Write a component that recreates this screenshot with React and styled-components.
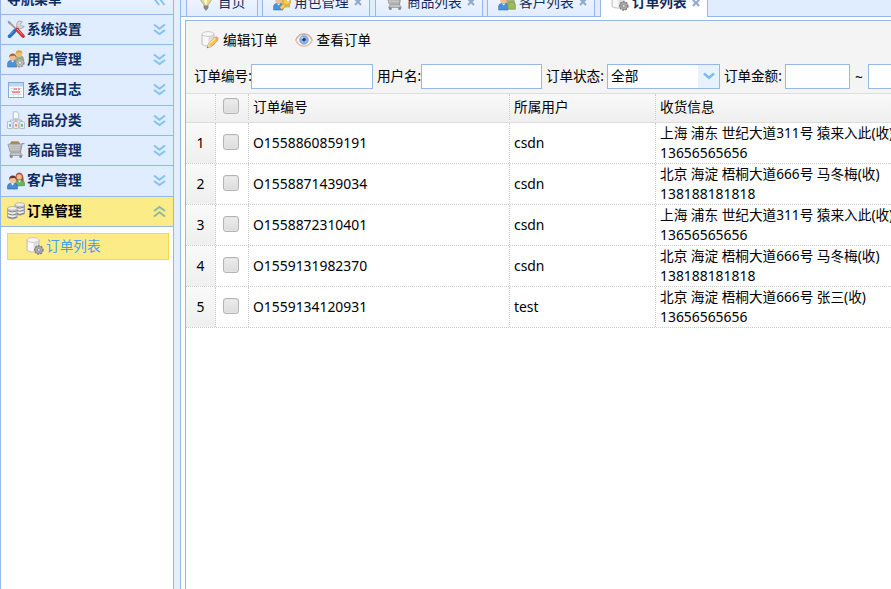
import React from 'react'
import styled, { createGlobalStyle } from 'styled-components'

const GlobalStyle = createGlobalStyle`
  * { box-sizing: border-box; }
  body {
    margin: 0;
    overflow: hidden;
    background: #fff;
    font-family: "Noto Sans", "Noto Sans CJK SC", sans-serif;
    font-size: 13.65px;
    color: #000;
  }
`

const ToolsIcon = () => (
  <svg width="18" height="18" viewBox="0 0 18 18">
    <path d="M13 5 5 14" stroke="#9a9a9a" strokeWidth="3.2" />
    <path d="M13 5 5 14" stroke="#e9e9e9" strokeWidth="1.8" />
    <path d="M12.2 1a3.9 3.9 0 1 0 5 5l-2.6.2-1.4-1.6L15.2 1.5Z" fill="#d9d9d9" stroke="#9b9b9b" strokeWidth=".7" />
    <path d="m2 2 8 8" stroke="#959595" strokeWidth="1.7" />
    <path d="M.8.5 3.5 2l.6 2-1.3.4L1 3Z" fill="#999" />
    <path d="m10 9.5 6 6.6" stroke="#dc3038" strokeWidth="3.6" strokeLinecap="round" />
    <path d="m10 9 5 5.5" stroke="#f88e8b" />
    <path d="m7.6 11-5 5.2" stroke="#246cc4" strokeWidth="3.6" strokeLinecap="round" />
    <path d="m6.6 11-4 4" stroke="#76afe8" />
  </svg>
)

const UsersIcon = ({ tool }) => (
  <svg width="18" height="18" viewBox="0 0 18 18">
    <path d="M7.6 11V8.5q0-2.4 3-2.6h3q3 .3 3 3V14h-9Z" fill={tool === 'key' ? '#e9c25a' : '#a3b57c'} stroke="#8c925a" strokeWidth=".5" />
    <circle cx="12" cy="3.8" r="3.1" fill="#f2bc80" />
    <path d="M8.7 4Q8.5.5 12 .3q3.8.2 3.4 4l-1.2-1.8-3.4.2Z" fill="#dba341" />
    <path d="M.6 17v-3.7q.3-2.7 3-3h3.6q2.7.4 2.8 3V17Z" fill="#4b92d8" stroke="#3474b4" strokeWidth=".6" />
    <path d="m4 10.4 1.6 2 1.8-2Z" fill="#f8faff" />
    <circle cx="5.6" cy="7.1" r="3.3" fill="#f2bd91" />
    <path d="M2.2 7.5Q2 3.8 5.7 3.5q3.7.3 3.4 3.9L7.8 5.8l-4.2.1Z" fill="#a9643b" />
    {tool === 'gear' && (
      <>
        <circle cx="13" cy="12.8" r="3.9" fill="#c3c8bf" stroke="#8f958d" strokeWidth="1.6" strokeDasharray="2 .9" />
        <circle cx="13" cy="12.8" r="3.2" fill="#b4bab0" />
        <circle cx="13" cy="12.8" r="1.4" fill="#f0f3ee" stroke="#8d918b" strokeWidth=".5" />
      </>
    )}
    {tool === 'key' && (
      <>
        <path d="m13 10-5 5.5" stroke="#cb9a28" strokeWidth="4" />
        <path d="m13 10-5 5.5" stroke="#f8cf5c" strokeWidth="2.6" />
        <circle cx="13.7" cy="8.4" r="3.8" fill="#f5c952" stroke="#cf9b2a" strokeWidth=".8" />
        <circle cx="15" cy="7.2" r="1.1" fill="#fff" />
      </>
    )}
    {tool === 'plain' && (
      <path d="M9.8 16.2V12q0-2.7 2.6-3h2q3 .4 3 3v4.2Z" fill="#9bbc56" stroke="#70913c" strokeWidth=".6" />
    )}
  </svg>
)

const CustomersIcon = () => (
  <svg width="18" height="18" viewBox="0 0 18 18">
    <path d="M8.3 8.4Q7.8.7 12.4.5 17 .8 16.6 9.8Z" fill="#a9513c" />
    <circle cx="12.2" cy="4.9" r="2.6" fill="#f4bc91" />
    <path d="M8.5 14V11q.1-2.4 3-2.5h2.9q3 .2 3.1 2.6v2.6Z" fill="#6db25c" stroke="#4b8e43" strokeWidth=".6" />
    <path d="m11 8.5 1.5 2 1.5-2Z" fill="#fff" />
    <path d="M.6 17v-2.8q.2-2.7 3-3h3.8q2.8.3 3 3V17Z" fill="#4890d6" stroke="#2b67a6" strokeWidth=".7" />
    <path d="m3.8 11.2 1.8 2.4 1.8-2.4Z" fill="#fff" />
    <circle cx="5.6" cy="7.5" r="3.3" fill="#f5bf99" />
    <path d="M2.2 8Q1.8 3.5 5.8 3.5q3.8.1 3.3 4.2L8 6l-4.5.2Z" fill="#6d3a28" />
  </svg>
)

const LogIcon = () => (
  <svg width="18" height="18" viewBox="0 0 18 18">
    <rect x="1.5" y="1.5" width="15" height="15" fill="#f9fbff" stroke="#8aa9d2" />
    <path d="M2 2h14v3.5H2Z" fill="#bdd6f2" />
    <path d="M3.5 7.5h11M3.5 10.5h11M3.5 13.5h11" stroke="#cfdfe3" />
    <path d="M6.5 6.5v9M11.5 6.5v9" stroke="#d6ddd9" />
    <path d="M7 8.2h3m1 0h2M5 11.2h8" stroke="#f08a8c" strokeWidth="1.8" />
  </svg>
)

const CategoryIcon = () => (
  <svg width="18" height="18" viewBox="0 0 18 18">
    <path d="M9 5v6M3.5 12V9h11v3" fill="none" stroke="#b2b6bb" />
    <path d="M6.3.8H10l1.7 1.6v5.4H6.3Z" fill="#f8fafc" stroke="#abb1b7" strokeWidth=".8" />
    <g fill="#fbfdff" stroke="#a4a9b0" strokeWidth=".8">
      <path d="M.6 10.7h3.6l1 1.2v5.5H.6Z" />
      <path d="M6.7 10.7h3.6l1 1.2v5.5H6.7Z" />
      <path d="M12.8 10.7h3.6l1 1.2v5.5h-4.6Z" />
    </g>
    <path d="M2 12.8h2v3H2Z" fill="#70b4ee" />
    <path d="M8 12.8h2v3H8Z" fill="#f1935f" />
    <path d="M14 12.8h2v3h-2Z" fill="#67bd92" />
  </svg>
)

const CartIcon = () => (
  <svg width="18" height="18" viewBox="0 0 18 18">
    <path d="M3 3.2 4.5.8h7L13 3.2Z" fill="#bb8550" stroke="#976b40" strokeWidth=".6" />
    <path d="M17.5 2.6H15l-1.8 9.6" fill="none" stroke="#999" strokeWidth="1.3" />
    <path d="M1 3.2h13.4l-1.6 7.6H3Z" fill="#d8d8d8" stroke="#a1a1a1" />
    <path d="M1.8 5.2h12M2.4 7.2h11M2.8 9.2h10" stroke="#a3a3a3" strokeWidth=".8" />
    <path d="M5 3.5l.7 7M8 3.5v7M11 3.5l-.7 7" stroke="#b9b9b9" strokeWidth=".7" />
    <path d="M4 11.3h9.4l2 3.2H2.6Z" fill="#c2c2c2" stroke="#919191" strokeWidth=".7" />
    <circle cx="4.3" cy="15.6" r="1.5" fill="#8b8b8b" />
    <circle cx="13.6" cy="15.6" r="1.5" fill="#8b8b8b" />
  </svg>
)

const Disk = ({ x, y }) => (
  <g transform={`translate(${x} ${y})`}>
    <path d="M0 1.8v9.3q4.8 3 9.5 0V1.8Z" fill="#d3d3d0" stroke="#929292" strokeWidth=".8" />
    <path d="M.4 4.4q4.4 2.4 8.7 0M.4 7.5q4.4 2.4 8.7 0M.4 10.6q4.4 2.4 8.7 0" fill="none" stroke="#818181" />
    <path d="M.5 5.6q4.3 2.3 7 .6M.5 8.7q4.3 2.3 7 .6" fill="none" stroke="#f5f5f5" strokeWidth="1.2" />
    <ellipse cx="4.75" cy="2" rx="4.7" ry="1.9" fill="#eee" stroke="#a3a3a3" strokeWidth=".7" />
  </g>
)

const DatabaseIcon = () => (
  <svg width="18" height="18" viewBox="0 0 18 18">
    <Disk x={8} y={0.6} />
    <Disk x={0.6} y={4.4} />
  </svg>
)

const OrderIcon = ({ edit }) => (
  <svg width="18" height="18" viewBox="0 0 18 18">
    <path d="M1 3v10.4q5 3.4 12 0V3Z" fill="#dedee0" stroke="#b5b5ba" strokeWidth=".8" />
    <path d="M1.8 4.5v8.7q2.6 1.2 5.7 1.2V5.2Z" fill="#f9f9fa" />
    <ellipse cx="7" cy="3" rx="6" ry="2.4" fill="#f6f6f7" stroke="#c0c0c4" strokeWidth=".8" />
    {edit ? (
      <>
        <path d="m6.2 16.8 1.1-4 6.6-6.5 3.1 3-6.7 6.3Z" fill="#f6bf55" stroke="#c98c46" strokeWidth=".7" />
        <path d="m8.5 12.7 6-5.6" stroke="#ffe392" strokeWidth="1.6" />
        <path d="m13.8 6.3 1.2-1.1q2.4.2 2.7 2.8l-1 1.2Z" fill="#e9a287" />
        <path d="m6.2 16.8 1.1-4 1 .3 1.5 2.2-.5.5Z" fill="#f0d5b3" />
        <path d="m6 17 .5-1.5 1 .9Z" fill="#555" />
      </>
    ) : (
      <>
        <circle cx="12.8" cy="12.9" r="4" fill="#989898" stroke="#858585" strokeWidth="1.7" strokeDasharray="1.9 1" />
        <circle cx="12.8" cy="12.9" r="3.2" fill="#a8a8a8" />
        <circle cx="12.8" cy="12.9" r="1.4" fill="#ececec" stroke="#777" strokeWidth=".6" />
      </>
    )}
  </svg>
)

const EyeIcon = () => (
  <svg width="18" height="18" viewBox="0 0 18 18">
    <path d="M.8 9.2Q3.5 3 9 3t8.2 6.2Q14.5 15.2 9 15.2T.8 9.2Z" fill="#f7f9fc" stroke="#e6c0a9" strokeWidth="1.6" />
    <path d="M.8 8.6Q3.5 3 9 3t8.2 5.6" fill="none" stroke="#c9a793" strokeWidth="1" />
    <circle cx="9" cy="8.9" r="4.4" fill="#8ab2e6" stroke="#6d95cc" strokeWidth=".6" />
    <circle cx="9" cy="8.6" r="1.7" fill="#1f3359" />
    <circle cx="7.2" cy="7" r="1" fill="#c5dcf7" />
  </svg>
)

const FunnelIcon = () => (
  <svg width="18" height="18" viewBox="0 0 18 18">
    <path d="M3 2h12l-.8 5.5L11 12v3L9 17.5 7 15v-3L3.8 7.5Z" fill="#e4d989" stroke="#aaa58d" strokeWidth=".8" />
    <path d="M6 4h4v7.5H8.4Z" fill="#fffbc8" />
    <path d="M6.8 12.6h4.4v2.5l-2.2 2.4-2.2-2.4Z" fill="#858585" />
  </svg>
)

const Chevrons = ({ dir }) => (
  <Arrow $dir={dir} width="13" height="13" viewBox="0 0 13 13">
    <path d="m1 1.5 5.5 4.2L12 1.5M1 6.9l5.5 4.2L12 6.9" fill="none" stroke="currentColor" strokeWidth="1.9" />
  </Arrow>
)

const menus = [
  { text: '系统设置', icon: <ToolsIcon />, h: 30 },
  { text: '用户管理', icon: <UsersIcon tool="gear" />, h: 30 },
  { text: '系统日志', icon: <LogIcon />, h: 31 },
  { text: '商品分类', icon: <CategoryIcon />, h: 30 },
  { text: '商品管理', icon: <CartIcon />, h: 30 },
  { text: '客户管理', icon: <CustomersIcon />, h: 31 },
  { text: '订单管理', icon: <DatabaseIcon />, h: 30, active: true },
]

const tabs = [
  { text: '首页', icon: <FunnelIcon />, w: 72, gap: 4 },
  { text: '角色管理', icon: <UsersIcon tool="key" />, w: 108, gap: 5, close: true },
  { text: '商品列表', icon: <CartIcon />, w: 108, gap: 4, close: true },
  { text: '客户列表', icon: <UsersIcon tool="plain" />, w: 108, gap: 5, close: true },
  { text: '订单列表', icon: <OrderIcon />, w: 108, gap: 0, close: true, active: true },
]

const rows = [
  ['O1558860859191', 'csdn', '上海 浦东 世纪大道311号 猿来入此(收)', '13656565656'],
  ['O1558871439034', 'csdn', '北京 海淀 梧桐大道666号 马冬梅(收)', '138188181818'],
  ['O1558872310401', 'csdn', '上海 浦东 世纪大道311号 猿来入此(收)', '13656565656'],
  ['O1559131982370', 'csdn', '北京 海淀 梧桐大道666号 马冬梅(收)', '138188181818'],
  ['O1559134120931', 'test', '北京 海淀 梧桐大道666号 张三(收)', '13656565656'],
]

export default function App() {
  return (
    <Layout>
      <GlobalStyle />
      <Sidebar>
        <NavTitle>
          <span>导航菜单</span>
          <Chevrons dir="left" />
        </NavTitle>
        {menus.map((m) => (
          <MenuItem key={m.text} $active={m.active} $h={m.h}>
            {m.icon}
            <span>{m.text}</span>
            <Chevrons dir={m.active ? 'up' : 'down'} />
          </MenuItem>
        ))}
        <SubItem>
          <OrderIcon />
          <span>订单列表</span>
        </SubItem>
      </Sidebar>
      <Splitter />
      <Main>
        <TabBar>
          {tabs.map((t) => (
            <Tab key={t.text} $w={t.w} $gap={t.gap} $active={t.active}>
              {t.icon}
              <span>{t.text}</span>
              {t.close && (
                <Close width="8" height="8" viewBox="0 0 7 7">
                  <path d="m.8.8 5.4 5.4M6.2.8.8 6.2" stroke="#8eaad1" strokeWidth="1.8" />
                </Close>
              )}
            </Tab>
          ))}
          <TabRest />
        </TabBar>
        <Panel>
          <Toolbar>
            <ToolButton><OrderIcon edit />编辑订单</ToolButton>
            <ToolButton><EyeIcon />查看订单</ToolButton>
          </Toolbar>
          <Filter>
            <Label $w={57}>订单编号:</Label>
            <Input $w={122} />
            <Label $w={44} $left={4}>用户名:</Label>
            <Input $w={121} />
            <Label $w={61} $left={4}>订单状态:</Label>
            <Combo>
              <span>全部</span>
              <ComboArrow>
                <svg width="12" height="8" viewBox="0 0 12 8">
                  <path d="m1 1.4 5 4.4 5-4.4" fill="none" stroke="#80bdec" strokeWidth="2.6" />
                </svg>
              </ComboArrow>
            </Combo>
            <Label $w={61} $left={4}>订单金额:</Label>
            <Input $w={65} />
            <Tilde>~</Tilde>
            <Input $w={65} />
          </Filter>
          <GridHead>
            <Cell />
            <Cell $center><Check /></Cell>
            <Cell>订单编号</Cell>
            <Cell>所属用户</Cell>
            <Cell>收货信息</Cell>
          </GridHead>
          {rows.map((r, i) => (
            <GridRow key={r[0]}>
              <Cell $num $center>{i + 1}</Cell>
              <Cell $center><Check /></Cell>
              <Cell $latin>{r[0]}</Cell>
              <Cell $latin>{r[1]}</Cell>
              <Cell>
                <Address>
                  <div>{r[2]}</div>
                  <Phone>{r[3]}</Phone>
                </Address>
              </Cell>
            </GridRow>
          ))}
        </Panel>
      </Main>
    </Layout>
  )
}

const Layout = styled.div`
  display: flex;
  width: 891px;
  height: 589px;
  overflow: hidden;
  white-space: nowrap;
  svg { flex: none; }
`

const Sidebar = styled.div`
  width: 174px;
  flex: none;
  border: solid #95b8e7;
  border-width: 0 1px;
`

const Arrow = styled.svg`
  color: ${(p) => (p.$dir === 'up' ? '#8fb8a4' : '#80c2f2')};
  transform: rotate(${(p) => ({ up: 180, left: 90, down: 0 })[p.$dir]}deg);
`

const NavTitle = styled.div`
  height: 15px;
  padding: 0 7px 0 6px;
  display: flex;
  align-items: flex-end;
  justify-content: space-between;
  overflow: hidden;
  border-bottom: 1px solid #95b8e7;
  background: linear-gradient(#e9f1ff, #e0ecff);
  color: #0e2d5f;
  font-weight: bold;
  line-height: 20px;
  span { margin-bottom: 5px; }
  svg { margin-bottom: 8px; }
`

const MenuItem = styled.div`
  height: ${(p) => p.$h}px;
  padding: 0 7px 1px 6px;
  display: flex;
  align-items: center;
  border-bottom: 1px solid #95b8e7;
  background: ${(p) => (p.$active ? '#fbec88' : '#e0ecff')};
  color: ${(p) => (p.$active ? '#000' : '#0e2d5f')};
  font-weight: bold;
  line-height: 20px;
  span { flex: 1; margin: 0 0 1px 2px; }
`

const SubItem = styled.div`
  width: 162px;
  height: 27px;
  margin: 6px 0 0 6px;
  padding: 0 0 1px 18px;
  display: flex;
  align-items: center;
  gap: 2px;
  border: 1px solid #fcd645;
  background: #fbec88;
  color: #4a9df0;
  line-height: 20px;
  span { margin-bottom: 1px; }
`

const Splitter = styled.div`
  width: 6px;
  flex: none;
  background: #e6eef8;
`

const Main = styled.div`
  flex: 1;
  min-width: 0;
  border-left: 1px solid #95b8e7;
`

const TabBar = styled.div`
  height: 17px;
  display: flex;
  padding-left: 5px;
  background: linear-gradient(#e0ecff, #e0ecff 16px, #95b8e7 16px);
`

const Tab = styled.div`
  width: ${(p) => p.$w}px;
  height: ${(p) => (p.$active ? 17 : 16)}px;
  margin-right: ${(p) => p.$gap}px;
  flex: none;
  display: flex;
  align-items: flex-end;
  overflow: hidden;
  padding-left: 10px;
  border: solid #95b8e7;
  border-width: 0 1px;
  background: ${(p) => (p.$active ? '#fff' : 'linear-gradient(#edf4ff, #e0ecff)')};
  color: #0e2d5f;
  font-weight: ${(p) => (p.$active ? 'bold' : 'normal')};
  line-height: 20px;
  svg { margin-bottom: ${(p) => (p.$active ? 6 : 5)}px; }
  span {
    margin-left: 3px;
    margin-bottom: ${(p) => (p.$active ? 5 : 4)}px;
  }
`

const Close = styled.svg`
  && { margin: 0 0 ${(p) => p.$up || 10}px 5px; }
`

const TabRest = styled.div`
  flex: 1;
`

const Panel = styled.div`
  height: 569px;
  margin: 3px 0 0 4px;
  border: solid #95b8e7;
  border-width: 1px 0 0 1px;
`

const Toolbar = styled.div`
  height: 38px;
  display: flex;
  align-items: center;
  gap: 17px;
  padding-left: 15px;
  background: #f4f4f4;
`

const ToolButton = styled.div`
  display: flex;
  align-items: center;
  gap: 4px;
  line-height: 20px;
`

const Filter = styled.div`
  height: 35px;
  display: flex;
  align-items: center;
  padding: 0 0 0 8px;
  border-bottom: 1px solid #ddd;
  background: #f4f4f4;
  overflow: hidden;
`

const Label = styled.span`
  width: ${(p) => p.$w}px;
  margin-left: ${(p) => p.$left || 0}px;
  flex: none;
  line-height: 20px;
  letter-spacing: -0.1px;
`

const Input = styled.input`
  width: ${(p) => p.$w}px;
  height: 25px;
  flex: none;
  padding: 0 4px;
  border: 1px solid #95b8e7;
  border-radius: 0;
  background: #fff;
  outline: none;
`

const Combo = styled.div`
  width: 113px;
  height: 25px;
  flex: none;
  display: flex;
  align-items: center;
  justify-content: space-between;
  padding-left: 3px;
  border: 1px solid #95b8e7;
  background: #fff;
  line-height: 20px;
`

const ComboArrow = styled.div`
  width: 21px;
  height: 23px;
  display: grid;
  place-items: center;
  background: #e8f2fd;
`

const Tilde = styled.span`
  width: 18px;
  flex: none;
  text-align: center;
`

const GridHead = styled.div`
  display: grid;
  grid-template-columns: 30px 33px 261px 146px 1fr;
  height: 29px;
  padding-bottom: 2px;
  border-bottom: 1px solid #ddd;
  background: linear-gradient(#f9f9f9, #efefef);
`

const GridRow = styled.div`
  display: grid;
  grid-template-columns: 30px 33px 261px 146px 1fr;
  height: 41px;
  border-bottom: 1px dotted #ccc;
`

const Cell = styled.div`
  min-width: 0;
  display: flex;
  align-items: center;
  justify-content: ${(p) => (p.$center ? 'center' : 'flex-start')};
  padding-left: ${(p) => (p.$center ? 0 : 4)}px;
  border-right: 1px dotted #ccc;
  background: ${(p) => (p.$num ? 'linear-gradient(to bottom, #f9f9f9, #efefef)' : 'transparent')};
  font-size: ${(p) => (p.$latin || p.$num ? 13.9 : 13.65)}px;
  line-height: 20px;
  overflow: hidden;
  &:last-child { border-right: 0; }
`

const Check = styled.span`
  width: 16px;
  height: 16px;
  margin: 0 2px 2px 0;
  border: 1px solid #b4b4b4;
  border-radius: 3px;
  background: linear-gradient(#ececec, #dcdcdc);
  box-shadow: inset 0 0 0 1px #e4e4e4;
`

const Address = styled.div`
  line-height: 20px;
`

const Phone = styled.div`
  font-size: 13.9px;
`
